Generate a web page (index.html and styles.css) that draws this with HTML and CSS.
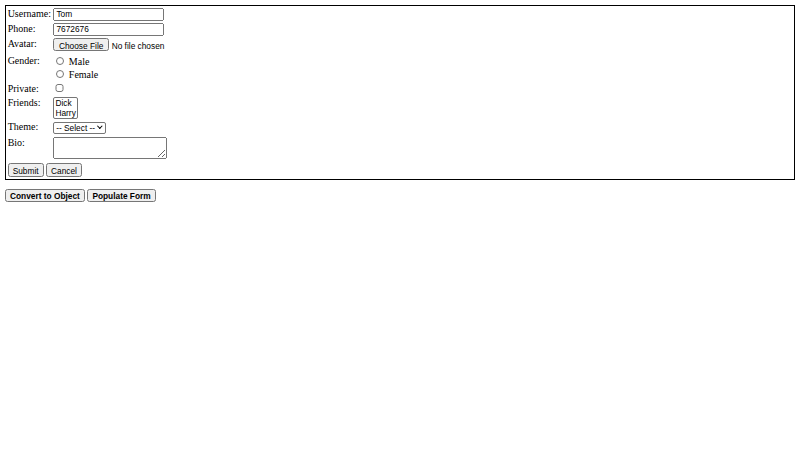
FILE: index.html
```html
<!DOCTYPE html>
<html>
<head>
<meta charset="utf-8">
<title>Form</title>
<link rel="stylesheet" href="styles.css">
</head>
<body>
<form class="profile-form">
  <table class="form-table">
    <tr>
      <td class="label">Username:</td>
      <td><input class="text-field" type="text" name="username" value="Tom"></td>
    </tr>
    <tr>
      <td class="label">Phone:</td>
      <td><input class="text-field" type="text" name="phone" value="7672676"></td>
    </tr>
    <tr>
      <td class="label">Avatar:</td>
      <td><input class="file-field" type="file" name="avatar"></td>
    </tr>
    <tr>
      <td class="label">Gender:</td>
      <td>
        <div class="option"><input class="radio" type="radio" name="gender" value="male"> Male</div>
        <div class="option"><input class="radio" type="radio" name="gender" value="female"> Female</div>
      </td>
    </tr>
    <tr>
      <td class="label">Private:</td>
      <td><input class="check" type="checkbox" name="private"></td>
    </tr>
    <tr>
      <td class="label">Friends:</td>
      <td>
        <select class="list-field" name="friends" multiple size="2">
          <option>Dick</option>
          <option>Harry</option>
        </select>
      </td>
    </tr>
    <tr>
      <td class="label">Theme:</td>
      <td>
        <span class="select-wrap">
          <select class="select-field" name="theme">
            <option>-- Select --</option>
            <option>Light</option>
            <option>Dark</option>
          </select>
        </span>
      </td>
    </tr>
    <tr>
      <td class="label">Bio:</td>
      <td><textarea class="area-field" name="bio"></textarea></td>
    </tr>
    <tr>
      <td class="button-cell" colspan="2"><button class="btn" type="submit">Submit</button> <button class="btn" type="button">Cancel</button></td>
    </tr>
  </table>
</form>
<div class="actions">
  <button type="button" class="btn action">Convert to Object</button>
  <button type="button" class="btn action">Populate Form</button>
</div>
</body>
</html>
```

FILE: styles.css
```css
body {
  margin: 5px;
  font-family: "Liberation Serif", "Times New Roman", serif;
  font-size: 10px;
  background: #fff;
  color: #000;
}
input, select, textarea, button {
  font-family: "Liberation Sans", Arial, sans-serif;
  font-size: 8.333px;
}
.profile-form {
  border: 1px solid #000;
  margin: 0;
}
.form-table {
  border-spacing: 1.25px;
}
.form-table td {
  padding: 0.625px;
  vertical-align: top;
}
.text-field {
  box-sizing: border-box;
  width: 111px;
  height: 13px;
  padding: 0.625px 1.25px;
  margin: 0;
  vertical-align: top;
}
.file-field {
  margin: 0 0 1.5px;
  height: 13px;
  vertical-align: top;
}
.file-field::file-selector-button {
  font-size: 8.333px;
  padding: 0.625px 3.75px;
  margin: 0 2.5px 0 0;
  height: 13px;
}
.option {
  line-height: 12px;
}
.radio {
  width: 8.125px;
  height: 8.125px;
  margin: 1.875px 1.875px 0 3.125px;
}
.check {
  width: 8.75px;
  height: 8.75px;
  margin: 0.6px 1.875px 1.875px 2.2px;
  vertical-align: top;
}
.list-field {
  box-sizing: border-box;
  width: 25px;
  height: 22.5px;
  margin: 0;
  vertical-align: top;
}
.list-field option {
  padding: 0 1.25px 0.625px;
}
.select-wrap {
  position: relative;
  display: inline-block;
  vertical-align: top;
  margin-top: 0.5px;
}
.select-field {
  appearance: none;
  -webkit-appearance: none;
  box-sizing: border-box;
  display: block;
  width: 53px;
  height: 12.5px;
  margin: 0;
  padding: 0 9px 0 2px;
  border: 1px solid #767676;
  border-radius: 2px;
  background: #fff;
  color: #000;
  line-height: 10px;
}
.select-wrap::after {
  content: "";
  position: absolute;
  right: 4.5px;
  top: 2.6px;
  width: 2.6px;
  height: 2.6px;
  border-right: 1.5px solid #000;
  border-bottom: 1.5px solid #000;
  transform: rotate(45deg);
  pointer-events: none;
}
.area-field {
  box-sizing: border-box;
  width: 114px;
  height: 22.5px;
  padding: 1.25px;
  margin: 0;
}
.button-cell {
  padding-top: 2.6px;
}
.btn {
  padding: 0.625px 3px;
  margin: 0;
  height: 13.75px;
}
.actions {
  margin-top: 9px;
}
.action {
  font-weight: bold;
}
```
